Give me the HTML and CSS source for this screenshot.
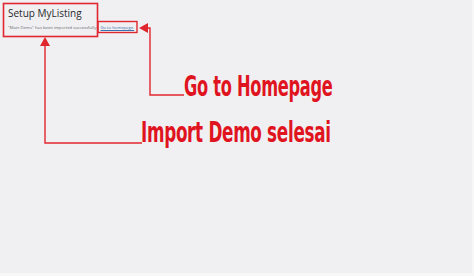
FILE: index.html
```html
<!DOCTYPE html>
<html>
<head>
<meta charset="utf-8">
<link rel="stylesheet" href="styles.css">
</head>
<body>
<div class="page">
  <div class="wrap">
    <h1 class="title">Setup MyListing</h1>
    <p class="msg">"Main Demo" has been imported successfully. <a class="link" href="#">Go to homepage.</a></p>
  </div>
  <svg class="marks" width="474" height="276" viewBox="0 0 474 276">
    <rect x="3.5" y="3.5" width="94" height="33" fill="none" stroke="#e0262e" stroke-width="1.6"/>
    <rect x="98" y="21.5" width="39" height="11" fill="none" stroke="#e0262e" stroke-width="1.4"/>
    <polyline points="45,44 45,143 142,143" fill="none" stroke="#e0262e" stroke-width="1.4"/>
    <polygon points="45,37 40,46 50,46" fill="#e0262e"/>
    <polyline points="147,28 150,28 150,95 184,95" fill="none" stroke="#e0262e" stroke-width="1.4"/>
    <polygon points="139,28 148,23 148,33" fill="#e0262e"/>
  </svg>
  <div class="note note-home">Go to Homepage</div>
  <div class="note note-import">Import Demo selesai</div>
</div>
</body>
</html>
```
FILE: styles.css
```css
html, body {
  margin: 0;
  padding: 0;
  background: #f7f7f8;
}
.page {
  position: relative;
  width: 472px;
  height: 273px;
  background: #f0f0f2;
  overflow: hidden;
  font-family: "Open Sans", "Liberation Sans", sans-serif;
}
.wrap {
  padding: 6px 0 0 8px;
}
.title {
  margin: 0;
  font-size: 10px;
  font-weight: 400;
  color: #2a2a2e;
  line-height: 14px;
}
.msg {
  margin: 4px 0 0 0;
  font-size: 4.2px;
  color: #6b6b70;
  line-height: 8px;
}
.link {
  color: #3b6fb0;
  text-decoration: underline;
  margin-left: 2px;
}
.marks {
  position: absolute;
  left: 0;
  top: 0;
}
.note {
  position: absolute;
  font-family: "DejaVu Sans", sans-serif;
  font-weight: 700;
  color: #e0141e;
  white-space: nowrap;
  transform-origin: 0 0;
  letter-spacing: -0.5px;
  font-size: 28px;
  line-height: 30px;
}
.note-home {
  left: 184px;
  top: 72px;
  transform: scaleX(0.58);
}
.note-import {
  left: 141px;
  top: 118px;
  transform: scaleX(0.6);
}
```
